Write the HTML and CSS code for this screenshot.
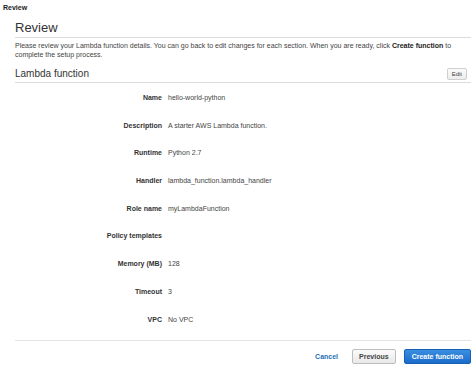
FILE: index.html
```html
<!DOCTYPE html>
<html>
<head>
<meta charset="utf-8">
<link rel="stylesheet" href="styles.css">
</head>
<body>
<div class="crumb">Review</div>
<div class="page">
  <h1 class="title">Review</h1>
  <p class="intro">Please review your Lambda function details. You can go back to edit changes for each section. When you are ready, click <b>Create function</b> to<br>complete the setup process.</p>
  <div class="section-head">
    <h2 class="section-title">Lambda function</h2>
    <button class="edit">Edit</button>
  </div>
  <div class="rows">
    <div class="row"><div class="label">Name</div><div class="value">hello-world-python</div></div>
    <div class="row"><div class="label">Description</div><div class="value">A starter AWS Lambda function.</div></div>
    <div class="row"><div class="label">Runtime</div><div class="value">Python 2.7</div></div>
    <div class="row"><div class="label">Handler</div><div class="value">lambda_function.lambda_handler</div></div>
    <div class="row"><div class="label">Role name</div><div class="value">myLambdaFunction</div></div>
    <div class="row"><div class="label">Policy templates</div><div class="value"></div></div>
    <div class="row"><div class="label">Memory (MB)</div><div class="value">128</div></div>
    <div class="row"><div class="label">Timeout</div><div class="value">3</div></div>
    <div class="row"><div class="label">VPC</div><div class="value">No VPC</div></div>
  </div>
  <div class="footer">
    <a class="cancel">Cancel</a>
    <button class="btn prev">Previous</button>
    <button class="btn primary">Create function</button>
  </div>
</div>
</body>
</html>
```
FILE: styles.css
```css
html, body {
  margin: 0;
  padding: 0;
  background: #ffffff;
  font-family: "Liberation Sans", Arial, sans-serif;
  color: #444;
  font-size: 7px;
}
.crumb {
  font-weight: bold;
  color: #222;
  font-size: 7px;
  padding: 3px 0 0 3px;
  line-height: 9px;
}
.page {
  padding: 0 3px 0 15px;
}
.title {
  margin: 8px 0 0;
  font-size: 13px;
  font-weight: normal;
  color: #333;
  line-height: 15px;
  padding-bottom: 2px;
  border-bottom: 1px solid #dcdcdc;
}
.intro {
  margin: 3px 0 0;
  line-height: 9px;
  color: #444;
}
.intro b { color: #222; }
.section-head {
  display: flex;
  align-items: center;
  justify-content: space-between;
  margin-top: 9px;
  padding-bottom: 2px;
  border-bottom: 1px solid #dcdcdc;
}
.section-title {
  margin: 0;
  font-size: 10px;
  font-weight: normal;
  color: #333;
  line-height: 12px;
}
.edit {
  font-family: inherit;
  font-size: 6px;
  color: #444;
  background: linear-gradient(#fbfbfb, #ececec);
  border: 1px solid #cfcfcf;
  border-radius: 2px;
  padding: 0 4px;
  height: 12px;
  margin-right: 4px;
}
.rows {
  display: flex;
  flex-direction: column;
  padding-top: 10px;
}
.row {
  display: flex;
  gap: 6px;
  height: 27.7px;
  line-height: 9px;
}
.label {
  width: 147px;
  text-align: right;
  font-weight: bold;
  color: #333;
}
.value { color: #444; }
.footer {
  display: flex;
  align-items: center;
  justify-content: flex-end;
  border-top: 1px solid #e3e3e3;
  margin-top: -2px;
  padding-top: 8px;
  gap: 8px;
}
.cancel {
  color: #1f6fb5;
  font-weight: bold;
  margin-right: 6px;
}
.btn {
  font-family: inherit;
  font-size: 7px;
  font-weight: bold;
  height: 15px;
  border-radius: 2px;
  padding: 0 7px;
}
.prev {
  background: linear-gradient(#fafafa, #e9e9e9);
  border: 1px solid #bdbdbd;
  color: #444;
  padding: 0 6px;
}
.primary {
  background: linear-gradient(#3b8fe0, #1a6ccb);
  border: 1px solid #1760b5;
  color: #fff;
}
```
